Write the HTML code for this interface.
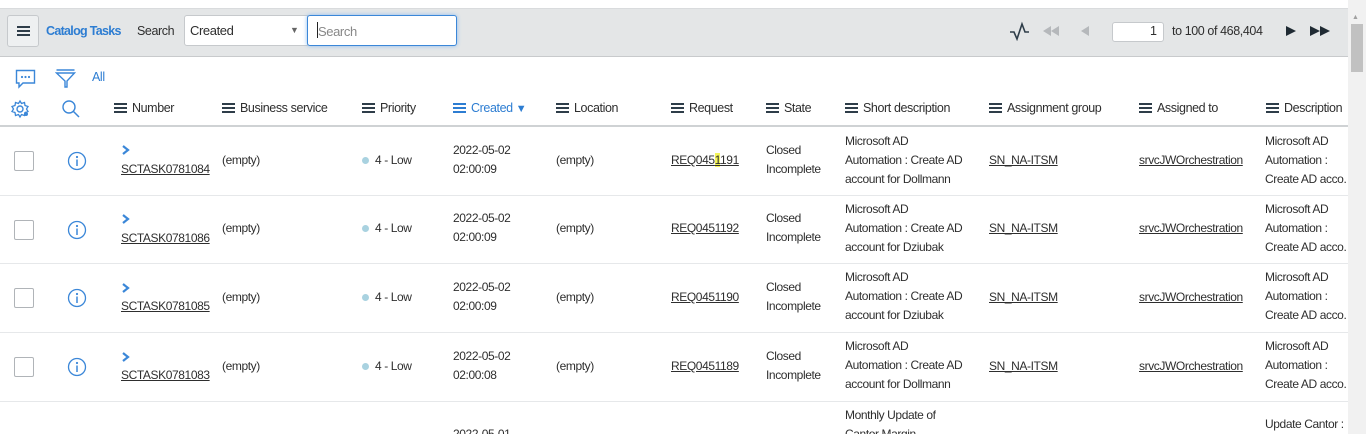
<!DOCTYPE html>
<html><head><meta charset="utf-8"><style>
*{box-sizing:border-box;margin:0;padding:0}
body{width:1366px;height:434px;overflow:hidden;background:#fff;font-family:"Liberation Sans",sans-serif;font-size:12px;letter-spacing:-0.4px;color:#2e2e2e;position:relative}
.a{position:absolute;white-space:nowrap;line-height:19px}
.u{text-decoration:underline}
.hb{display:inline-block;width:13px;height:10px;vertical-align:-1px;margin-right:5px;background:linear-gradient(#2e3d49 0 2px,transparent 2px 4px,#2e3d49 4px 6px,transparent 6px 8px,#2e3d49 8px 10px)}
.h{position:absolute;top:101px;font-size:12.5px;color:#2e2e2e;white-space:nowrap}
.cb{position:absolute;left:14px;width:20px;height:20px;border:1px solid #b0b4b8;border-radius:2px;background:#fff}
.line{position:absolute;left:0;width:1348px;height:1px;background:#e6e8ea}
.dot{position:absolute;width:7px;height:7px;border-radius:50%;background:#a9d2e0}
</style></head><body>
<div style="position:absolute;left:0;top:8px;width:1348px;height:49px;background:#e4e6e7;border-top:1px solid #d9dbdd;border-bottom:1px solid #c8cacc"></div>
<div style="position:absolute;left:7px;top:15px;width:32px;height:32px;border:1px solid #c6c9cc;border-radius:3px;background:#eef0f1"><span class="hb" style="position:absolute;left:9px;top:10px;width:13px"></span></div>
<div class="a" style="left:46px;top:22px;color:#2d7dd2;font-weight:bold;font-size:12.5px;letter-spacing:-0.7px">Catalog Tasks</div>
<div class="a" style="left:137px;top:22px;font-size:12.5px">Search</div>
<div style="position:absolute;left:184px;top:15px;width:124px;height:31px;background:#fff;border:1px solid #c6c9cc;border-radius:3px 0 0 3px"></div>
<div class="a" style="left:190px;top:21px;font-size:13px">Created</div>
<div class="a" style="left:290px;top:21px;font-size:9px;color:#666">▼</div>
<div style="position:absolute;left:307px;top:15px;width:150px;height:31px;background:#fff;border:1px solid #3b87d8;border-radius:3px;box-shadow:0 0 4px #8bbcf0"></div>
<div style="position:absolute;left:317px;top:22px;width:1px;height:16px;background:#222"></div>
<div class="a" style="left:318px;top:22px;font-size:13px;color:#888">Search</div>
<svg style="position:absolute;left:1009px;top:21px" width="22" height="20"><path d="M1 11 L5 11 L8 18 L13 3 L16 11 L20 11" fill="none" stroke="#2e3d49" stroke-width="1.6"/></svg>
<svg style="position:absolute;left:1043px;top:25px" width="50" height="12"><path d="M0 6 L8 1 V11 Z M8 6 L16 1 V11 Z M38 6 L46 1 V11 Z" fill="#b5b8bb"/></svg>
<div style="position:absolute;left:1112px;top:22px;width:52px;height:20px;background:#fff;border:1px solid #c6c9cc;border-radius:3px"></div>
<div class="a" style="left:1150px;top:22px;font-size:12.5px">1</div>
<div class="a" style="left:1172px;top:22px;font-size:12.5px">to 100 of 468,404</div>
<svg style="position:absolute;left:1286px;top:25px" width="50" height="12"><path d="M0 1 L10 6 L0 11 Z M24 1 L34 6 L24 11 Z M34 1 L44 6 L34 11 Z" fill="#1f2a33"/></svg>
<div style="position:absolute;left:1348px;top:0;width:18px;height:434px;background:#f1f1f1"></div>
<div style="position:absolute;left:1351px;top:24px;width:12px;height:48px;background:#c1c1c1"></div>
<div class="a" style="left:1352px;top:8px;font-size:7px;color:#a0a0a0">▲</div>
<svg style="position:absolute;left:15px;top:68px" width="22" height="22"><path d="M1.5 2.5 H19.5 V15 H8 L4 19 V15 H1.5 Z" fill="none" stroke="#3b87d8" stroke-width="1.4"/><circle cx="7" cy="9" r="1.1" fill="#3b87d8"/><circle cx="10.5" cy="9" r="1.1" fill="#3b87d8"/><circle cx="14" cy="9" r="1.1" fill="#3b87d8"/></svg>
<svg style="position:absolute;left:55px;top:68px" width="22" height="22"><path d="M1.5 2 H19.5 M1.5 5 H19.5 L12 13 V19 H10 V13 Z" fill="none" stroke="#3b87d8" stroke-width="1.4"/></svg>
<div class="a" style="left:92px;top:68px;color:#2d7dd2;font-size:12.5px">All</div>
<svg style="position:absolute;left:10px;top:99px" width="20" height="20"><circle cx="10" cy="10" r="3" fill="none" stroke="#3b87d8" stroke-width="1.4"/><path d="M10 2 L11.5 4.5 L14.5 3.5 L15 6.5 L18 7.5 L16.5 10 L18 12.5 L15 13.5 L14.5 16.5 L11.5 15.5 L10 18 L8.5 15.5 L5.5 16.5 L5 13.5 L2 12.5 L3.5 10 L2 7.5 L5 6.5 L5.5 3.5 L8.5 4.5 Z" fill="none" stroke="#3b87d8" stroke-width="1.3"/><circle cx="16" cy="15" r="2" fill="#3b87d8"/></svg>
<svg style="position:absolute;left:61px;top:99px" width="20" height="20"><circle cx="8" cy="8" r="6" fill="none" stroke="#3b87d8" stroke-width="1.4"/><path d="M12.5 12.5 L18 18" stroke="#3b87d8" stroke-width="1.5"/></svg>
<div class="h" style="left:114px"><span class="hb"></span>Number</div>
<div class="h" style="left:222px"><span class="hb"></span>Business service</div>
<div class="h" style="left:362px"><span class="hb"></span>Priority</div>
<div class="h" style="left:453px;color:#2d7dd2"><span class="hb" style="background:linear-gradient(#2d7dd2 0 2px,transparent 2px 4px,#2d7dd2 4px 6px,transparent 6px 8px,#2d7dd2 8px 10px)"></span>Created <span style="font-size:11px">▼</span></div>
<div class="h" style="left:556px"><span class="hb"></span>Location</div>
<div class="h" style="left:671px"><span class="hb"></span>Request</div>
<div class="h" style="left:766px"><span class="hb"></span>State</div>
<div class="h" style="left:845px"><span class="hb"></span>Short description</div>
<div class="h" style="left:989px"><span class="hb"></span>Assignment group</div>
<div class="h" style="left:1139px"><span class="hb"></span>Assigned to</div>
<div class="h" style="left:1266px"><span class="hb"></span>Description</div>
<div style="position:absolute;left:0;top:125px;width:1348px;height:2px;background:#cfd2d4"></div>

<div class="line" style="top:195px"></div>
<div class="line" style="top:263px"></div>
<div class="line" style="top:332px"></div>
<div class="line" style="top:401px"></div>

<div style="position:absolute;left:0;top:126px;width:1348px;height:69px">
<div class="cb" style="top:25px"></div>
<svg style="position:absolute;left:67px;top:25px" width="20" height="20"><circle cx="10" cy="10" r="8.5" fill="none" stroke="#3b87d8" stroke-width="1.3"/><circle cx="10" cy="6" r="1.1" fill="#3b87d8"/><path d="M10 8.5 V15" stroke="#3b87d8" stroke-width="1.5"/></svg>
<svg style="position:absolute;left:122px;top:19px" width="8" height="10"><path d="M1 1 L6 5 L1 9" fill="none" stroke="#3b87d8" stroke-width="2.2"/></svg>
<div class="a u" style="left:121px;top:34px">SCTASK0781084</div>
<div class="a" style="left:222px;top:25px">(empty)</div>
<div class="dot" style="left:362px;top:31px"></div>
<div class="a" style="left:375px;top:25px">4 - Low</div>
<div class="a" style="left:453px;top:15px">2022-05-02<br>02:00:09</div>
<div class="a" style="left:556px;top:25px">(empty)</div>
<div class="a u" style="left:671px;top:25px">REQ045<span style="background:#f5f55a">1</span>191</div>
<div class="a" style="left:766px;top:15px">Closed<br>Incomplete</div>
<div class="a" style="left:845px;top:6px">Microsoft AD<br>Automation : Create AD<br>account for Dollmann</div>
<div class="a u" style="left:989px;top:25px">SN_NA-ITSM</div>
<div class="a u" style="left:1139px;top:25px">srvcJWOrchestration</div>
<div class="a" style="left:1265px;top:6px">Microsoft AD<br>Automation :<br>Create AD acco.</div>
</div>

<div style="position:absolute;left:0;top:195px;width:1348px;height:69px">
<div class="cb" style="top:25px"></div>
<svg style="position:absolute;left:67px;top:25px" width="20" height="20"><circle cx="10" cy="10" r="8.5" fill="none" stroke="#3b87d8" stroke-width="1.3"/><circle cx="10" cy="6" r="1.1" fill="#3b87d8"/><path d="M10 8.5 V15" stroke="#3b87d8" stroke-width="1.5"/></svg>
<svg style="position:absolute;left:122px;top:19px" width="8" height="10"><path d="M1 1 L6 5 L1 9" fill="none" stroke="#3b87d8" stroke-width="2.2"/></svg>
<div class="a u" style="left:121px;top:34px">SCTASK0781086</div>
<div class="a" style="left:222px;top:24px">(empty)</div>
<div class="dot" style="left:362px;top:30px"></div>
<div class="a" style="left:375px;top:24px">4 - Low</div>
<div class="a" style="left:453px;top:14px">2022-05-02<br>02:00:09</div>
<div class="a" style="left:556px;top:24px">(empty)</div>
<div class="a u" style="left:671px;top:24px">REQ0451192</div>
<div class="a" style="left:766px;top:14px">Closed<br>Incomplete</div>
<div class="a" style="left:845px;top:5px">Microsoft AD<br>Automation : Create AD<br>account for Dziubak</div>
<div class="a u" style="left:989px;top:24px">SN_NA-ITSM</div>
<div class="a u" style="left:1139px;top:24px">srvcJWOrchestration</div>
<div class="a" style="left:1265px;top:5px">Microsoft AD<br>Automation :<br>Create AD acco.</div>
</div>

<div style="position:absolute;left:0;top:264px;width:1348px;height:69px">
<div class="cb" style="top:24px"></div>
<svg style="position:absolute;left:67px;top:24px" width="20" height="20"><circle cx="10" cy="10" r="8.5" fill="none" stroke="#3b87d8" stroke-width="1.3"/><circle cx="10" cy="6" r="1.1" fill="#3b87d8"/><path d="M10 8.5 V15" stroke="#3b87d8" stroke-width="1.5"/></svg>
<svg style="position:absolute;left:122px;top:19px" width="8" height="10"><path d="M1 1 L6 5 L1 9" fill="none" stroke="#3b87d8" stroke-width="2.2"/></svg>
<div class="a u" style="left:121px;top:33px">SCTASK0781085</div>
<div class="a" style="left:222px;top:24px">(empty)</div>
<div class="dot" style="left:362px;top:30px"></div>
<div class="a" style="left:375px;top:24px">4 - Low</div>
<div class="a" style="left:453px;top:14px">2022-05-02<br>02:00:09</div>
<div class="a" style="left:556px;top:24px">(empty)</div>
<div class="a u" style="left:671px;top:24px">REQ0451190</div>
<div class="a" style="left:766px;top:14px">Closed<br>Incomplete</div>
<div class="a" style="left:845px;top:4px">Microsoft AD<br>Automation : Create AD<br>account for Dziubak</div>
<div class="a u" style="left:989px;top:24px">SN_NA-ITSM</div>
<div class="a u" style="left:1139px;top:24px">srvcJWOrchestration</div>
<div class="a" style="left:1265px;top:4px">Microsoft AD<br>Automation :<br>Create AD acco.</div>
</div>

<div style="position:absolute;left:0;top:333px;width:1348px;height:69px">
<div class="cb" style="top:24px"></div>
<svg style="position:absolute;left:67px;top:24px" width="20" height="20"><circle cx="10" cy="10" r="8.5" fill="none" stroke="#3b87d8" stroke-width="1.3"/><circle cx="10" cy="6" r="1.1" fill="#3b87d8"/><path d="M10 8.5 V15" stroke="#3b87d8" stroke-width="1.5"/></svg>
<svg style="position:absolute;left:122px;top:19px" width="8" height="10"><path d="M1 1 L6 5 L1 9" fill="none" stroke="#3b87d8" stroke-width="2.2"/></svg>
<div class="a u" style="left:121px;top:33px">SCTASK0781083</div>
<div class="a" style="left:222px;top:24px">(empty)</div>
<div class="dot" style="left:362px;top:30px"></div>
<div class="a" style="left:375px;top:24px">4 - Low</div>
<div class="a" style="left:453px;top:14px">2022-05-02<br>02:00:08</div>
<div class="a" style="left:556px;top:24px">(empty)</div>
<div class="a u" style="left:671px;top:24px">REQ0451189</div>
<div class="a" style="left:766px;top:14px">Closed<br>Incomplete</div>
<div class="a" style="left:845px;top:4px">Microsoft AD<br>Automation : Create AD<br>account for Dollmann</div>
<div class="a u" style="left:989px;top:24px">SN_NA-ITSM</div>
<div class="a u" style="left:1139px;top:24px">srvcJWOrchestration</div>
<div class="a" style="left:1265px;top:4px">Microsoft AD<br>Automation :<br>Create AD acco.</div>
</div>

<div style="position:absolute;left:0;top:402px;width:1348px;height:32px;overflow:hidden">
<div class="a" style="left:845px;top:4px">Monthly Update of<br>Cantor Margin</div>
<div class="a" style="left:453px;top:23px">2022-05-01</div>
<div class="a" style="left:1265px;top:13px">Update Cantor :</div>
</div>
</body></html>
